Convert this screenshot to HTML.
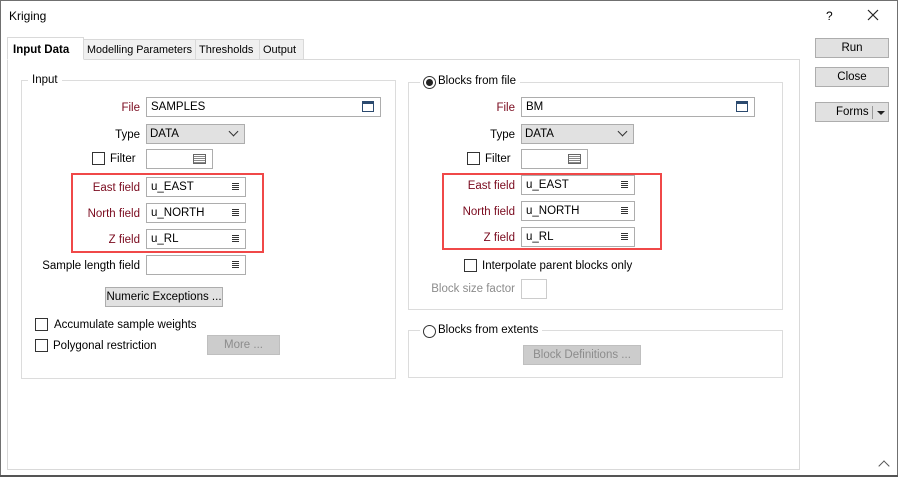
<!DOCTYPE html>
<html><head><style>
*{box-sizing:border-box;margin:0;padding:0}
body{width:898px;height:477px;overflow:hidden;background:#fff;font-family:"Liberation Sans",sans-serif;font-size:11.5px;color:#000;position:relative}
.a{position:absolute}
.win{left:0;top:0;width:898px;height:476px;border:1px solid #707070;border-bottom:none}
.tab{position:absolute;top:39px;height:20px;background:#f0f0f0;border:1px solid #d9d9d9;border-bottom:none;padding:4px 0 0 3px;white-space:nowrap;font-size:11px;overflow:hidden}
.panel{left:7px;top:59px;width:793px;height:411px;border:1px solid #d9d9d9}
.grp{position:absolute;border:1px solid #dcdcdc}
.gl{position:absolute;background:#fff;padding:0 4px;white-space:nowrap;margin-top:1px}
.lbl{position:absolute;text-align:right;white-space:nowrap;margin-top:2px}
.red{color:#7a0a1e}
.in{position:absolute;height:20px;border:1px solid #adadad;background:#fff;padding:3px 0 0 4px;white-space:nowrap}
.sel{position:absolute;height:20px;border:1px solid #adadad;background:#e1e1e1;padding:3px 0 0 3px}
.btn{position:absolute;height:20px;border:1px solid #adadad;background:#e1e1e1;text-align:center;padding-top:3px;white-space:nowrap}
.dis{color:#8c8c8c;background:#cccccc;border-color:#bfbfbf}
.cb{position:absolute;width:13px;height:13px;border:1px solid #333;background:#fff}
.ham{position:absolute;right:6px;top:5px;width:7px;height:8px;background:repeating-linear-gradient(#333 0 1px,transparent 1px 2px)}
.cal{position:absolute;right:6px;top:3px;width:12px;height:11px;border:1px solid #2b4a6f;border-top:3px solid #2b4a6f}
.chev{position:absolute;right:7px;top:3px;width:7px;height:7px;border-right:1px solid #333;border-bottom:1px solid #333;transform:rotate(45deg)}
.flt{position:absolute;right:6px;top:4px;width:13px;height:10px;border:1px solid #666;background:repeating-linear-gradient(#fff 0 1px,#888 1px 2px)}
.rb{position:absolute;width:13px;height:13px;border:1px solid #333;border-radius:50%;background:#fff}
.redbox{position:absolute;border:2px solid #f04848}
</style></head><body>
<div class="a win"></div>
<div class="a" style="left:9px;top:9px;font-size:12px">Kriging</div>
<div class="a" style="left:826px;top:9px;font-size:12px">?</div>
<svg class="a" style="left:867px;top:9px" width="12" height="12"><path d="M1 1L11 11M11 1L1 11" stroke="#222" stroke-width="1.2"/></svg>

<div class="a panel"></div>
<div class="tab" style="left:7px;top:37px;height:23px;background:#fff;font-weight:bold;width:77px;padding:6px 0 0 5px;border-bottom:1px solid #fff;font-size:11.5px">Input Data</div>
<div class="tab" style="left:83px;width:113px;font-size:10.8px">Modelling Parameters</div>
<div class="tab" style="left:195px;width:65px">Thresholds</div>
<div class="tab" style="left:259px;width:45px">Output</div>

<!-- Left group -->
<div class="grp" style="left:21px;top:80px;width:375px;height:299px"></div>
<div class="gl" style="left:28px;top:73px">Input</div>
<div class="lbl red" style="right:758px;top:100px">File</div>
<div class="in" style="left:146px;top:97px;width:235px">SAMPLES<div class="cal"></div></div>
<div class="lbl" style="right:758px;top:127px">Type</div>
<div class="sel" style="left:146px;top:124px;width:99px">DATA<div class="chev"></div></div>
<div class="cb" style="left:92px;top:152px"></div>
<div class="lbl" style="left:110px;top:151px">Filter</div>
<div class="in" style="left:146px;top:149px;width:67px"><div class="flt"></div></div>
<div class="redbox" style="left:71px;top:173px;width:193px;height:80px"></div>
<div class="lbl red" style="right:758px;top:180px">East field</div>
<div class="in" style="left:146px;top:177px;width:100px">u_EAST<div class="ham"></div></div>
<div class="lbl red" style="right:758px;top:206px">North field</div>
<div class="in" style="left:146px;top:203px;width:100px">u_NORTH<div class="ham"></div></div>
<div class="lbl red" style="right:758px;top:232px">Z field</div>
<div class="in" style="left:146px;top:229px;width:100px">u_RL<div class="ham"></div></div>
<div class="lbl" style="right:758px;top:258px">Sample length field</div>
<div class="in" style="left:146px;top:255px;width:100px"><div class="ham"></div></div>
<div class="btn" style="left:105px;top:287px;width:118px">Numeric Exceptions ...</div>
<div class="cb" style="left:35px;top:318px"></div>
<div class="lbl" style="left:54px;top:317px">Accumulate sample weights</div>
<div class="cb" style="left:35px;top:339px"></div>
<div class="lbl" style="left:53px;top:338px">Polygonal restriction</div>
<div class="btn dis" style="left:207px;top:335px;width:73px">More ...</div>

<!-- Right group -->
<div class="grp" style="left:408px;top:82px;width:375px;height:228px"></div>
<div class="gl" style="left:420px;top:74px;padding-left:18px">Blocks from file</div>
<div class="rb" style="left:423px;top:76px"><div style="position:absolute;left:2px;top:2px;width:7px;height:7px;border-radius:50%;background:#222"></div></div>
<div class="lbl red" style="right:383px;top:100px">File</div>
<div class="in" style="left:521px;top:97px;width:234px">BM<div class="cal"></div></div>
<div class="lbl" style="right:383px;top:127px">Type</div>
<div class="sel" style="left:521px;top:124px;width:113px">DATA<div class="chev"></div></div>
<div class="cb" style="left:467px;top:152px"></div>
<div class="lbl" style="left:485px;top:151px">Filter</div>
<div class="in" style="left:521px;top:149px;width:67px"><div class="flt"></div></div>
<div class="redbox" style="left:442px;top:173px;width:220px;height:77px"></div>
<div class="lbl red" style="right:383px;top:178px">East field</div>
<div class="in" style="left:521px;top:175px;width:114px">u_EAST<div class="ham"></div></div>
<div class="lbl red" style="right:383px;top:204px">North field</div>
<div class="in" style="left:521px;top:201px;width:114px">u_NORTH<div class="ham"></div></div>
<div class="lbl red" style="right:383px;top:230px">Z field</div>
<div class="in" style="left:521px;top:227px;width:114px">u_RL<div class="ham"></div></div>
<div class="cb" style="left:464px;top:259px"></div>
<div class="lbl" style="left:482px;top:258px">Interpolate parent blocks only</div>
<div class="lbl" style="right:383px;top:281px;color:#8c8c8c">Block size factor</div>
<div class="in" style="left:521px;top:279px;width:26px;border-color:#ccc"></div>

<div class="grp" style="left:408px;top:330px;width:375px;height:48px"></div>
<div class="gl" style="left:420px;top:323px;padding-left:18px">Blocks from extents</div>
<div class="rb" style="left:423px;top:325px"></div>
<div class="btn dis" style="left:523px;top:345px;width:118px">Block Definitions ...</div>

<!-- Side buttons -->
<div class="btn" style="left:815px;top:38px;width:74px">Run</div>
<div class="btn" style="left:815px;top:67px;width:74px">Close</div>
<div class="btn" style="left:815px;top:102px;width:74px;text-align:left;padding-left:20px">Forms<div style="position:absolute;left:56px;top:3px;width:1px;height:13px;background:#999"></div><div style="position:absolute;left:61px;top:8px;border:4px solid transparent;border-top:4px solid #222"></div></div>
<div class="a" style="left:880px;top:462px;width:8px;height:8px;border-left:1px solid #555;border-top:1px solid #555;transform:rotate(45deg)"></div>
<div class="a" style="left:0;top:475px;width:898px;height:2px;background:#555"></div>
</body></html>
